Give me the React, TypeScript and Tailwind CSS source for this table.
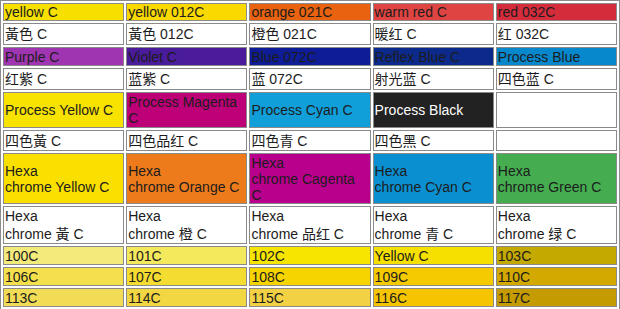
import React from 'react';

type Cell = { text: string; bg: string; fg?: string };
type Row = { lead: string; cells: Cell[] };

const W = 'bg-white';

const rows: Row[] = [
  {
    lead: 'leading-4',
    cells: [
      { text: 'yellow C', bg: 'bg-[#f7e000]' },
      { text: 'yellow 012C', bg: 'bg-[#f9d900]' },
      { text: 'orange 021C', bg: 'bg-[#e8620f]' },
      { text: 'warm red C', bg: 'bg-[#df4442]' },
      { text: 'red 032C', bg: 'bg-[#d52c3c]' },
    ],
  },
  {
    lead: 'leading-[18px]',
    cells: [
      { text: '黃色 C', bg: W },
      { text: '黃色 012C', bg: W },
      { text: '橙色 021C', bg: W },
      { text: '暖红 C', bg: W },
      { text: '红 032C', bg: W },
    ],
  },
  {
    lead: 'leading-4',
    cells: [
      { text: 'Purple C', bg: 'bg-[#a035b1]' },
      { text: 'Violet C', bg: 'bg-[#4a1b9a]' },
      { text: 'Blue 072C', bg: 'bg-[#0e1c98]' },
      { text: 'Reflex Blue C', bg: 'bg-[#0c2a8c]' },
      { text: 'Process Blue', bg: 'bg-[#0787cc]' },
    ],
  },
  {
    lead: 'leading-[18px]',
    cells: [
      { text: '红紫 C', bg: W },
      { text: '蓝紫 C', bg: W },
      { text: '蓝 072C', bg: W },
      { text: '射光蓝 C', bg: W },
      { text: '四色蓝 C', bg: W },
    ],
  },
  {
    lead: 'leading-4',
    cells: [
      { text: 'Process Yellow C', bg: 'bg-[#f8e200]' },
      { text: 'Process Magenta\nC', bg: 'bg-[#be0078]' },
      { text: 'Process Cyan C', bg: 'bg-[#119fd9]' },
      { text: 'Process Black', bg: 'bg-[#222222]', fg: 'text-white' },
      { text: '', bg: W },
    ],
  },
  {
    lead: 'leading-[18px]',
    cells: [
      { text: '四色黃 C', bg: W },
      { text: '四色品红 C', bg: W },
      { text: '四色青 C', bg: W },
      { text: '四色黑 C', bg: W },
      { text: '', bg: W },
    ],
  },
  {
    lead: 'leading-4',
    cells: [
      { text: 'Hexa\nchrome Yellow C', bg: 'bg-[#f9e000]' },
      { text: 'Hexa\nchrome Orange C', bg: 'bg-[#ed7b1c]' },
      { text: 'Hexa\nchrome Cagenta\nC', bg: 'bg-[#b9008c]' },
      { text: 'Hexa\nchrome Cyan C', bg: 'bg-[#0a90d0]' },
      { text: 'Hexa\nchrome Green C', bg: 'bg-[#45ad50]' },
    ],
  },
  {
    lead: 'leading-[18px]',
    cells: [
      { text: 'Hexa\nchrome 黃 C', bg: W },
      { text: 'Hexa\nchrome 橙 C', bg: W },
      { text: 'Hexa\nchrome 品红 C', bg: W },
      { text: 'Hexa\nchrome 青 C', bg: W },
      { text: 'Hexa\nchrome 绿 C', bg: W },
    ],
  },
  {
    lead: 'leading-4',
    cells: [
      { text: '100C', bg: 'bg-[#f3ea7c]' },
      { text: '101C', bg: 'bg-[#f4e85c]' },
      { text: '102C', bg: 'bg-[#f7e500]' },
      { text: 'Yellow C', bg: 'bg-[#f6e000]' },
      { text: '103C', bg: 'bg-[#c4a900]' },
    ],
  },
  {
    lead: 'leading-4',
    cells: [
      { text: '106C', bg: 'bg-[#f4e04c]' },
      { text: '107C', bg: 'bg-[#f5dc30]' },
      { text: '108C', bg: 'bg-[#f5d400]' },
      { text: '109C', bg: 'bg-[#f6ca00]' },
      { text: '110C', bg: 'bg-[#d3a900]' },
    ],
  },
  {
    lead: 'leading-4',
    cells: [
      { text: '113C', bg: 'bg-[#f3dc55]' },
      { text: '114C', bg: 'bg-[#f2d742]' },
      { text: '115C', bg: 'bg-[#f2d244]' },
      { text: '116C', bg: 'bg-[#f6c400]' },
      { text: '117C', bg: 'bg-[#c49b00]' },
    ],
  },
];

export default function App() {
  return (
    <div className="w-[620px] h-[309px] overflow-hidden bg-white font-[family-name:'Liberation_Sans','Noto_Sans_CJK_SC',sans-serif] text-[14px] text-[#1c1c1c]">
      <div className="grid grid-cols-5 grid-rows-[18px_22px_19px_22px_36px_21px_51px_38px_19px_19px_19px] gap-[2px] border border-[#8c8c8c] p-[2px]">
        {rows.map((row, r) =>
          row.cells.map((c, i) => (
            <div
              key={`${r}-${i}`}
              className={`flex flex-col justify-center border border-[#8a8a8a] pl-px whitespace-pre ${row.lead} ${c.bg} ${c.fg ?? ''}`}
            >
              {c.text}
            </div>
          ))
        )}
      </div>
    </div>
  );
}
